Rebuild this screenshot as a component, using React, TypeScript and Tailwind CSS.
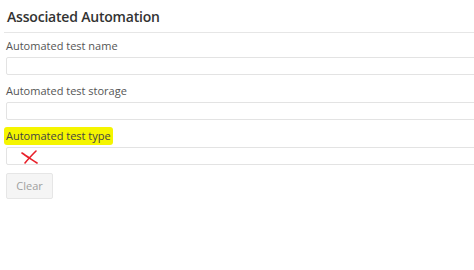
import React from "react";

function Field({ label, highlight, mark }: { label: string; highlight?: boolean; mark?: boolean }) {
  return (
    <div className="flex flex-col">
      <div className="pl-[6px] h-[16px] flex items-center">
        <span
          className={
            highlight
              ? "bg-[#f5f500] rounded-[3px] px-[2px] -ml-[2px] py-[1px] text-[11px] text-[#444]"
              : "text-[11px] text-[#555]"
          }
        >
          {label}
        </span>
      </div>
      <div className="relative ml-[6px] mt-[3px] w-[480px] h-[18px] border border-[#e3e3e3] rounded-[2px] bg-white">
        {mark && (
          <svg className="absolute left-[13px] top-[2px]" width="20" height="14" viewBox="0 0 20 14">
            <path d="M2 3 C6 6 11 9 17 13" stroke="#e8202a" strokeWidth="1.6" fill="none" strokeLinecap="round" />
            <path d="M16 1 C12 5 9 8 5 13" stroke="#e8202a" strokeWidth="1.6" fill="none" strokeLinecap="round" />
          </svg>
        )}
      </div>
    </div>
  );
}

export default function App() {
  return (
    <main
      className="w-[474px] h-[270px] overflow-hidden bg-white"
      style={{ fontFamily: '"Open Sans", "Noto Sans", sans-serif' }}
    >
      <div className="pl-[7px] pt-[6px] h-[32px] text-[14px] tracking-[-0.2px] font-semibold text-[#333]">
        Associated Automation
      </div>
      <div className="ml-[4px] border-t border-[#e6e6e6]" />
      <div className="flex flex-col gap-[8px] pt-[5px]">
        <Field label="Automated test name" />
        <Field label="Automated test storage" />
        <Field label="Automated test type" highlight mark />
      </div>
      <div className="pl-[6px] pt-[7px]">
        <button className="w-[47px] h-[26px] bg-[#f5f5f5] border border-[#e6e6e6] rounded-[2px] text-[11px] text-[#a0a0a0]">
          Clear
        </button>
      </div>
    </main>
  );
}
